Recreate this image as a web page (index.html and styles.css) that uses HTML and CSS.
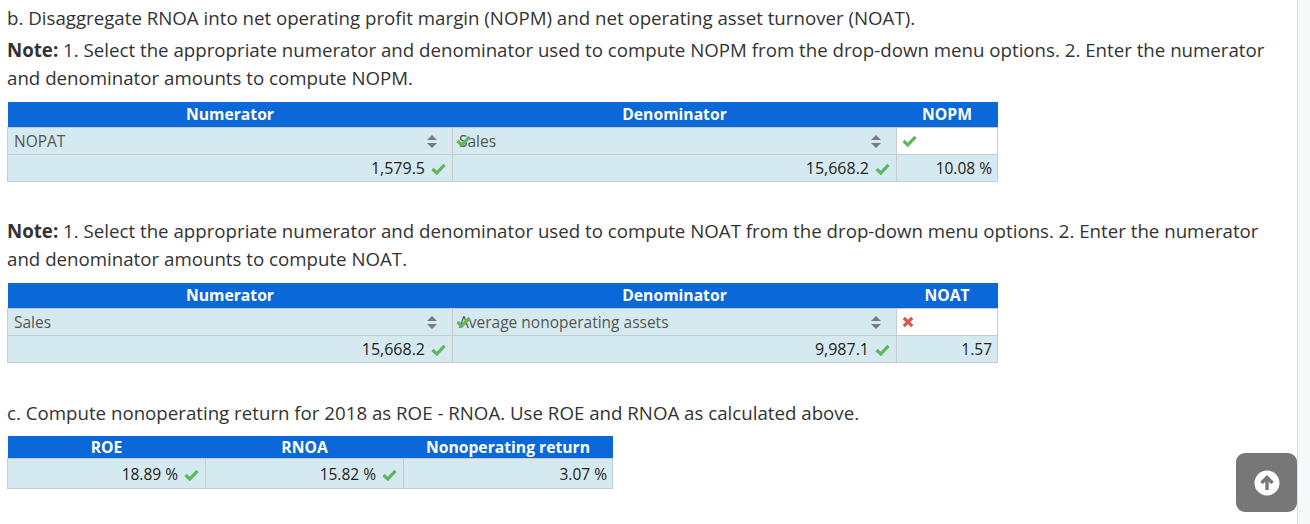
FILE: index.html
```html
<!DOCTYPE html>
<html>
<head>
<meta charset="utf-8">
<link rel="stylesheet" href="styles.css">
</head>
<body>
<div class="page">
  <main class="main">
    <p class="para first">b. Disaggregate RNOA into net operating profit margin (NOPM) and net operating asset turnover (NOAT).</p>
    <p class="para note"><b>Note:</b> 1. Select the appropriate numerator and denominator used to compute NOPM from the drop-down menu options. 2. Enter the numerator and denominator amounts to compute NOPM.</p>
    <table class="grid wide">
      <colgroup><col class="c1"><col class="c2"><col class="c3"></colgroup>
      <thead><tr><th>Numerator</th><th>Denominator</th><th>NOPM</th></tr></thead>
      <tbody>
        <tr class="r-sel">
          <td><div class="sel"><span>NOPAT</span><svg class="arr" width="10" height="13" viewBox="0 0 10 13"><path d="M5 0 L10 5 H0 Z M0 8 H10 L5 13 Z" fill="#7a7a7a"/></svg></div></td>
          <td class="rel"><svg class="ok over" width="15" height="12" viewBox="0 0 15 12"><path d="M1.5 6 L5.8 10 L13.5 1.8" fill="none" stroke="#5cb85c" stroke-width="3.2"/></svg><div class="sel"><span>Sales</span><svg class="arr" width="10" height="13" viewBox="0 0 10 13"><path d="M5 0 L10 5 H0 Z M0 8 H10 L5 13 Z" fill="#7a7a7a"/></svg></div></td>
          <td class="white"><svg class="ok" width="15" height="12" viewBox="0 0 15 12"><path d="M1.5 6 L5.8 10 L13.5 1.8" fill="none" stroke="#5cb85c" stroke-width="3.2"/></svg></td>
        </tr>
        <tr class="r-num">
          <td class="num"><span class="val">1,579.5</span><svg class="ok" width="15" height="12" viewBox="0 0 15 12"><path d="M1.5 6 L5.8 10 L13.5 1.8" fill="none" stroke="#5cb85c" stroke-width="3.2"/></svg></td>
          <td class="num"><span class="val">15,668.2</span><svg class="ok" width="15" height="12" viewBox="0 0 15 12"><path d="M1.5 6 L5.8 10 L13.5 1.8" fill="none" stroke="#5cb85c" stroke-width="3.2"/></svg></td>
          <td class="num res">10.08 %</td>
        </tr>
      </tbody>
    </table>

    <p class="para note second"><b>Note:</b> 1. Select the appropriate numerator and denominator used to compute NOAT from the drop-down menu options. 2. Enter the numerator and denominator amounts to compute NOAT.</p>
    <table class="grid wide">
      <colgroup><col class="c1"><col class="c2"><col class="c3"></colgroup>
      <thead><tr><th>Numerator</th><th>Denominator</th><th>NOAT</th></tr></thead>
      <tbody>
        <tr class="r-sel">
          <td><div class="sel"><span>Sales</span><svg class="arr" width="10" height="13" viewBox="0 0 10 13"><path d="M5 0 L10 5 H0 Z M0 8 H10 L5 13 Z" fill="#7a7a7a"/></svg></div></td>
          <td class="rel"><svg class="ok over" width="15" height="12" viewBox="0 0 15 12"><path d="M1.5 6 L5.8 10 L13.5 1.8" fill="none" stroke="#5cb85c" stroke-width="3.2"/></svg><div class="sel"><span>Average nonoperating assets</span><svg class="arr" width="10" height="13" viewBox="0 0 10 13"><path d="M5 0 L10 5 H0 Z M0 8 H10 L5 13 Z" fill="#7a7a7a"/></svg></div></td>
          <td class="white"><svg class="bad" width="12" height="12" viewBox="0 0 12 12"><path d="M1.8 1.8 L10.2 10.2 M10.2 1.8 L1.8 10.2" fill="none" stroke="#d9534f" stroke-width="3.2"/></svg></td>
        </tr>
        <tr class="r-num">
          <td class="num"><span class="val">15,668.2</span><svg class="ok" width="15" height="12" viewBox="0 0 15 12"><path d="M1.5 6 L5.8 10 L13.5 1.8" fill="none" stroke="#5cb85c" stroke-width="3.2"/></svg></td>
          <td class="num"><span class="val">9,987.1</span><svg class="ok" width="15" height="12" viewBox="0 0 15 12"><path d="M1.5 6 L5.8 10 L13.5 1.8" fill="none" stroke="#5cb85c" stroke-width="3.2"/></svg></td>
          <td class="num res">1.57</td>
        </tr>
      </tbody>
    </table>

    <p class="para third">c. Compute nonoperating return for 2018 as ROE - RNOA. Use ROE and RNOA as calculated above.</p>
    <table class="grid narrow">
      <colgroup><col class="d1"><col class="d2"><col class="d3"></colgroup>
      <thead><tr><th>ROE</th><th>RNOA</th><th>Nonoperating return</th></tr></thead>
      <tbody>
        <tr class="r-last">
          <td class="num"><span class="val pct">18.89 %</span><svg class="ok" width="15" height="12" viewBox="0 0 15 12"><path d="M1.5 6 L5.8 10 L13.5 1.8" fill="none" stroke="#5cb85c" stroke-width="3.2"/></svg></td>
          <td class="num"><span class="val pct">15.82 %</span><svg class="ok" width="15" height="12" viewBox="0 0 15 12"><path d="M1.5 6 L5.8 10 L13.5 1.8" fill="none" stroke="#5cb85c" stroke-width="3.2"/></svg></td>
          <td class="num res">3.07 %</td>
        </tr>
      </tbody>
    </table>
  </main>
  <aside class="side"></aside>
</div>
<button class="totop" type="button" aria-label="Back to top">
  <svg width="26" height="26" viewBox="0 0 26 26"><circle cx="13" cy="13" r="12.5" fill="#fff"/><path d="M13 20 V8 M7.5 13 L13 7.5 L18.5 13" fill="none" stroke="#777" stroke-width="3.4" stroke-linecap="butt" stroke-linejoin="miter"/></svg>
</button>
</body>
</html>
```

FILE: styles.css
```css
html, body {
  margin: 0;
  padding: 0;
  background: #fff;
}
body {
  font-family: "Open Sans", "Liberation Sans", sans-serif;
  color: #333;
  height: 524px;
  overflow: hidden;
}
.page {
  display: flex;
  height: 524px;
}
.main {
  flex: 1;
  padding: 4px 7px 0 7px;
}
.side {
  width: 12px;
  border-left: 1px solid #dcdde0;
  background: #f7f8fa;
}
.para {
  margin: 0;
  font-size: 18.7px;
  line-height: 28px;
}
.note {
  margin-top: 4px;
}
.note.second {
  margin-top: 35px;
}
.third {
  margin-top: 36px;
}
.note b {
  font-weight: 700;
}
.grid {
  border-collapse: collapse;
  table-layout: fixed;
  margin-top: 10px;
  font-size: 15.5px;
}
.narrow {
  margin-top: 9px;
}
.wide { width: 990px; }
.narrow { width: 605px; }
.c1 { width: 445px; }
.c2 { width: 444px; }
.c3 { width: 101px; }
.d1 { width: 198px; }
.d2 { width: 198px; }
.d3 { width: 209px; }
.grid th {
  background: #0b68d8;
  color: #fff;
  font-weight: 700;
  font-size: 15.7px;
  height: 25px;
  padding: 0;
  line-height: 25px;
  text-align: center;
}
.narrow th {
  height: 22px;
  line-height: 22px;
}
.grid td {
  background: #d5eaf0;
  border: 1px solid #c9cccd;
  padding: 0 6px;
  color: #222;
  vertical-align: middle;
}
.grid td.white {
  background: #fff;
  padding-left: 5px;
}
.r-sel td { height: 26px; }
.r-num td { height: 26px; }
.r-last td { height: 29px; }
.rel { position: relative; }
.sel {
  display: flex;
  align-items: center;
  justify-content: space-between;
  color: #555;
  padding-right: 9px;
}
.arr { display: block; }
.over {
  position: absolute;
  left: 3px;
  top: 7px;
}
.num {
  text-align: right;
}
.val {
  font-size: 16px;
}
.val.pct {
  font-size: 15.5px;
}
.num .ok {
  margin-left: 6px;
  vertical-align: -1px;
}
.num.res {
  padding-right: 5px;
}
.white .ok, .white .bad {
  display: block;
}
.totop {
  position: fixed;
  left: 1236px;
  top: 453px;
  width: 61px;
  height: 59px;
  border: 0;
  border-radius: 9px;
  background: #777;
  padding: 0;
  display: flex;
  align-items: center;
  justify-content: center;
}
.totop svg { display: block; }
```
